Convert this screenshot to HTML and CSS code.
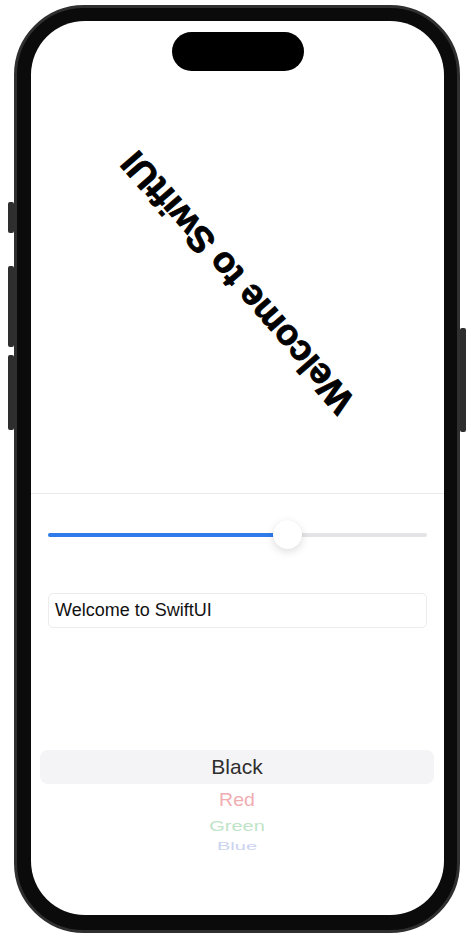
FILE: index.html
```html
<!DOCTYPE html>
<html>
<head>
<meta charset="utf-8">
<link rel="stylesheet" href="styles.css">
</head>
<body>
<div class="phone">
  <span class="btn btn-action"></span>
  <span class="btn btn-volup"></span>
  <span class="btn btn-voldown"></span>
  <span class="btn btn-power"></span>
  <div class="screen">
    <div class="island"></div>
    <div class="stage">
      <div class="rot">Welcome to SwiftUI</div>
    </div>
    <div class="divider"></div>
    <div class="controls">
      <div class="slider">
        <div class="track">
          <div class="fill" style="width: 63%"></div>
        </div>
        <div class="knob" style="left: 63%"></div>
      </div>
      <div class="field">Welcome to SwiftUI</div>
    </div>
    <div class="picker">
      <div class="sel">Black</div>
      <div class="item red">Red</div>
      <div class="item green">Green</div>
      <div class="item blue">Blue</div>
    </div>
  </div>
</div>
</body>
</html>
```

FILE: styles.css
```css
html, body {
  margin: 0;
  padding: 0;
  background: #ffffff;
}
body {
  font-family: "Liberation Sans", Arial, sans-serif;
  width: 474px;
  height: 941px;
  overflow: hidden;
}
.phone {
  position: relative;
  box-sizing: border-box;
  margin: 5px 0 0 14px;
  width: 446px;
  height: 928px;
  border-radius: 70px;
  background: #0b0b0b;
  border: 3px solid #2f2f2f;
  padding: 13px 13px 15px 14px;
}
.btn {
  position: absolute;
  width: 6px;
  background: #2e2e2e;
  border-radius: 2px;
}
.btn-action { left: -9px; top: 194px; height: 31px; }
.btn-volup { left: -9px; top: 258px; height: 81px; }
.btn-voldown { left: -9px; top: 347px; height: 75px; }
.btn-power { right: -9px; top: 320px; height: 104px; }
.screen {
  position: relative;
  height: 100%;
  background: #ffffff;
  border-radius: 54px;
  overflow: hidden;
  display: flex;
  flex-direction: column;
}
.island {
  position: absolute;
  top: 11px;
  left: 50%;
  margin-left: -66px;
  width: 132px;
  height: 39px;
  border-radius: 20px;
  background: #000;
}
.stage {
  height: 472px;
  display: flex;
  justify-content: center;
  align-items: flex-start;
  box-sizing: border-box;
}
.rot {
  margin-top: 240px;
  height: 42px;
  line-height: 42px;
  font-size: 36px;
  font-weight: bold;
  color: #000;
  -webkit-text-stroke: 0.9px #000;
  white-space: nowrap;
  transform: rotate(229deg);
}
.divider {
  height: 1px;
  background: #ebebeb;
}
.controls {
  padding: 26px 17px 0 17px;
  display: flex;
  flex-direction: column;
  gap: 44px;
}
.slider {
  position: relative;
  height: 29px;
  display: flex;
  align-items: center;
}
.track {
  width: 100%;
  height: 4px;
  border-radius: 2px;
  background: #e4e4e6;
  overflow: hidden;
}
.fill {
  height: 100%;
  background: #2f7bea;
}
.knob {
  position: absolute;
  top: 0;
  width: 29px;
  height: 29px;
  margin-left: -14px;
  border-radius: 50%;
  background: #fff;
  box-shadow: 0 3px 8px rgba(0,0,0,0.13), 0 0 1px rgba(0,0,0,0.08);
}
.field {
  box-sizing: border-box;
  height: 35px;
  border: 1px solid #ececec;
  border-radius: 5px;
  padding: 0 6px;
  font-size: 18px;
  line-height: 33px;
  color: #111;
}
.picker {
  margin-top: 122px;
  padding: 0 10px 0 9px;
  display: flex;
  flex-direction: column;
  align-items: center;
}
.sel {
  align-self: stretch;
  height: 34px;
  line-height: 34px;
  border-radius: 8px;
  background: #f4f4f6;
  text-align: center;
  font-size: 21px;
  color: #2e2e2e;
}
.item {
  text-align: center;
  white-space: nowrap;
}
.red {
  height: 30px;
  line-height: 30px;
  font-size: 19.5px;
  color: #f0aeb2;
  transform: scaleY(0.93);
}
.green {
  height: 24px;
  line-height: 24px;
  font-size: 20px;
  color: #bfe4c7;
  transform: scaleY(0.72);
}
.blue {
  height: 16px;
  line-height: 16px;
  font-size: 20px;
  color: #cbd3f0;
  transform: scaleY(0.55);
}
```
